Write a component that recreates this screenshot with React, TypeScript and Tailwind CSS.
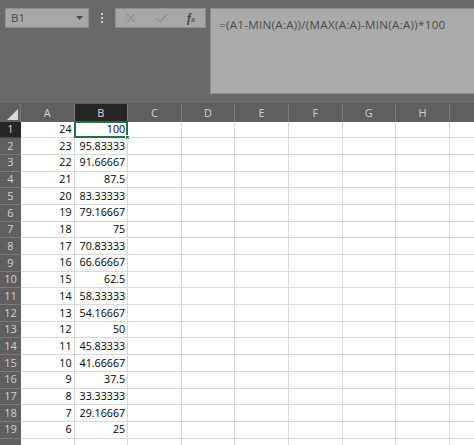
import React from "react";

const cols = ["A", "B", "C", "D", "E", "F", "G", "H", "I"];
const aVals = [24, 23, 22, 21, 20, 19, 18, 17, 16, 15, 14, 13, 12, 11, 10, 9, 8, 7, 6];
const bVals = [
  "100", "95.83333", "91.66667", "87.5", "83.33333", "79.16667", "75", "70.83333", "66.66667", "62.5",
  "58.33333", "54.16667", "50", "45.83333", "41.66667", "37.5", "33.33333", "29.16667", "25",
];

const font = { fontFamily: '"Open Sans", "Noto Sans", sans-serif' };

export default function App() {
  const rows = Array.from({ length: 20 }, (_, i) => i);
  return (
    <div className="w-[474px] h-[445px] overflow-hidden bg-white" style={font}>
      {/* Top bar */}
      <div className="h-[104px] bg-[#696969] flex items-start pt-[8px] pl-[5px] gap-0 border-b border-[#5a5a5a]">
        <div className="w-[84px] h-[20px] bg-[#a7a7a7] border border-[#8e8e8e] flex items-center justify-between pl-[5px] pr-[5px]">
          <span className="text-[11.5px] text-[#4a4a4a] leading-none">B1</span>
          <svg width="7" height="4" viewBox="0 0 7 4"><path d="M0 0h7L3.5 4z" fill="#4a4a4a" /></svg>
        </div>
        <div className="w-[26px] h-[20px] flex flex-col items-center justify-center gap-[2px]">
          <div className="w-[2px] h-[2px] bg-[#cfcfcf]" />
          <div className="w-[2px] h-[2px] bg-[#cfcfcf]" />
          <div className="w-[2px] h-[2px] bg-[#cfcfcf]" />
        </div>
        <div className="w-[91px] h-[20px] bg-[#a7a7a7] border border-[#8e8e8e] flex items-center">
          <div className="w-[30px] flex justify-center">
            <svg width="10" height="10" viewBox="0 0 10 10"><path d="M1 1l8 8M9 1l-8 8" stroke="#909090" strokeWidth="1.3" /></svg>
          </div>
          <div className="w-[31px] flex justify-center">
            <svg width="12" height="10" viewBox="0 0 12 10"><path d="M1 5.5l3.5 3.5L11 1" stroke="#909090" strokeWidth="1.4" fill="none" /></svg>
          </div>
          <div className="w-[28px] flex justify-center items-center">
            <span className="text-[12px] italic font-bold text-[#444] leading-none" style={{ fontFamily: '"Liberation Serif", serif' }}>f</span>
            <span className="text-[8px] italic font-bold text-[#444] leading-none mt-[4px]" style={{ fontFamily: '"Liberation Serif", serif' }}>x</span>
          </div>
        </div>
        <div className="ml-[4px] flex-1 h-[86px] bg-[#aaaaaa] border border-[#8e8e8e] border-r-0 pl-[8px] pt-[2px]">
          <span className="text-[11.6px] text-[#4a4a4a] tracking-[0.3px]">=(A1-MIN(A:A))/(MAX(A:A)-MIN(A:A))*100</span>
        </div>
      </div>

      {/* Grid */}
      <div className="grid grid-cols-[21px_repeat(9,53.6px)] grid-rows-[17.5px_repeat(20,16.7px)]">
        {/* header row */}
        <div className="bg-[#5f5f5f] border-r border-[#7a7a7a] relative">
          <svg className="absolute right-[2px] bottom-[2px]" width="11" height="11" viewBox="0 0 11 11"><path d="M11 0V11H0z" fill="#d8d8d8" /></svg>
        </div>
        {cols.map((c) => (
          <div
            key={c}
            className={
              c === "B"
                ? "bg-[#262626] border-r border-[#7a7a7a] flex items-center justify-center text-[11px] text-[#d8d8d8]"
                : "bg-[#5f5f5f] border-r border-[#7e7e7e] flex items-center justify-center text-[11px] text-[#d2d2d2]"
            }
          >
            {c === "I" ? "" : c}
          </div>
        ))}
        {rows.map((r) => (
          <React.Fragment key={r}>
            <div
              className={
                r === 0
                  ? "bg-[#262626] border-b border-[#444] flex items-center justify-center text-[11px] text-[#d8d8d8]"
                  : "bg-[#5f5f5f] border-b border-[#7a7a7a] flex items-center justify-center text-[11px] text-[#d2d2d2]"
              }
            >
              {r < 19 ? r + 1 : ""}
            </div>
            {cols.map((c) => {
              let text = "";
              if (r < 19 && c === "A") text = String(aVals[r]);
              if (r < 19 && c === "B") text = bVals[r];
              const sel = r === 0 && c === "B";
              return (
                <div
                  key={c}
                  className="relative border-r border-b border-[#d9d9d9] flex items-center justify-end pr-[2px] text-[10.7px] text-black leading-none"
                >
                  {text}
                  {sel && (
                    <>
                      <div className="absolute left-[-1px] top-[-1px] right-[-1px] bottom-[-1px] border-2 border-[#217346]" />
                      <div className="absolute right-[-3px] bottom-[-3px] w-[5px] h-[5px] bg-[#217346] border border-white" />
                    </>
                  )}
                </div>
              );
            })}
          </React.Fragment>
        ))}
      </div>
    </div>
  );
}
